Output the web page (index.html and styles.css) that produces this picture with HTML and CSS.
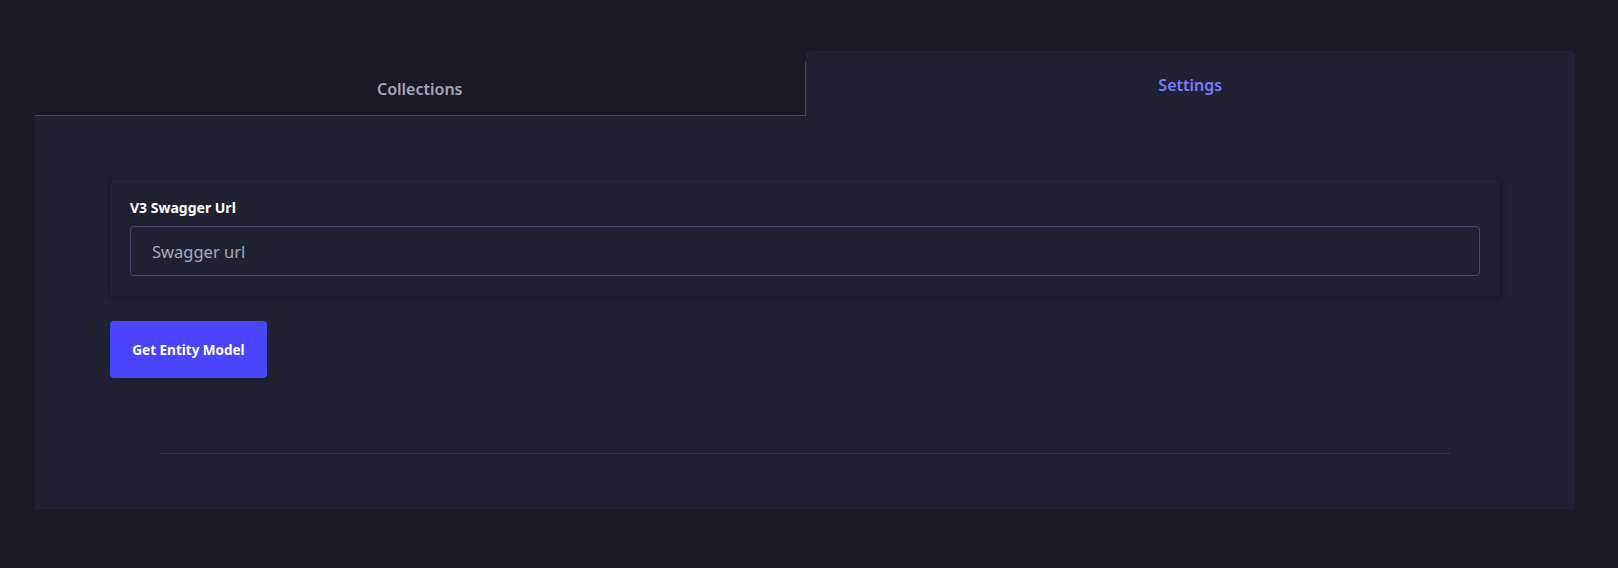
FILE: index.html
```html
<!DOCTYPE html>
<html lang="en">
<head>
<meta charset="utf-8">
<title>Settings</title>
<link rel="stylesheet" href="styles.css">
</head>
<body>
<div class="page">
  <div class="tabs">
    <div class="tablist">
      <div class="tab tab-inactive">Collections</div>
      <div class="tab tab-active">Settings</div>
    </div>
    <div class="panel">
      <div class="card">
        <label class="label" for="swagger">V3 Swagger Url</label>
        <input class="input" id="swagger" type="text" placeholder="Swagger url">
      </div>
      <button class="btn" type="button">Get Entity Model</button>
      <div class="divider"></div>
    </div>
  </div>
</div>
</body>
</html>
```
FILE: styles.css
```css
* { box-sizing: border-box; }
html, body { margin: 0; padding: 0; }
body {
  background: #1a1926;
  font-family: "Noto Sans", "Open Sans", sans-serif;
  width: 1618px;
  height: 568px;
  overflow: hidden;
}
.page {
  padding: 51px 0 0 35px;
}
.tabs {
  width: 1540px;
}
.tablist {
  display: flex;
  align-items: flex-end;
}
.tab {
  flex: 1 1 0;
  display: flex;
  align-items: center;
  justify-content: center;
  font-size: 16px;
  font-weight: 600;
}
.tab-inactive {
  height: 55px;
  color: #a5a5ba;
  border-right: 1px solid #454562;
  border-bottom: 1px solid #454562;
  padding-top: 1px;
}
.tab-active {
  height: 65px;
  color: #7b79ff;
  background: #212134;
  border-radius: 4px 4px 0 0;
  padding-top: 2px;
}
.panel {
  background: #212134;
  padding: 64px 75px 55px;
}
.card {
  background: #212134;
  border-radius: 4px;
  box-shadow: 0 1px 4px rgba(3, 3, 5, 0.35), 0 0 8px rgba(10, 10, 20, 0.25);
  padding: 20px;
}
.label {
  display: block;
  font-size: 14px;
  font-weight: 700;
  line-height: 16px;
  color: #ffffff;
  margin-bottom: 10px;
}
.input {
  display: block;
  width: 100%;
  height: 50px;
  background: #212134;
  border: 1px solid #4a4a6a;
  border-radius: 4px;
  padding: 0 20px 0 21px;
  font-family: inherit;
  font-size: 16.5px;
  color: #ffffff;
  outline: none;
}
.input::placeholder {
  color: #a9a9be;
  opacity: 1;
}
.btn {
  display: block;
  margin-top: 25px;
  width: 157px;
  height: 57px;
  padding: 0;
  border: 0;
  border-radius: 4px;
  background: #4945ff;
  color: #ffffff;
  font-family: inherit;
  font-size: 13.5px;
  font-weight: 700;
}
.divider {
  margin: 75px 50px 0;
  height: 1px;
  background: #363649;
}
```
